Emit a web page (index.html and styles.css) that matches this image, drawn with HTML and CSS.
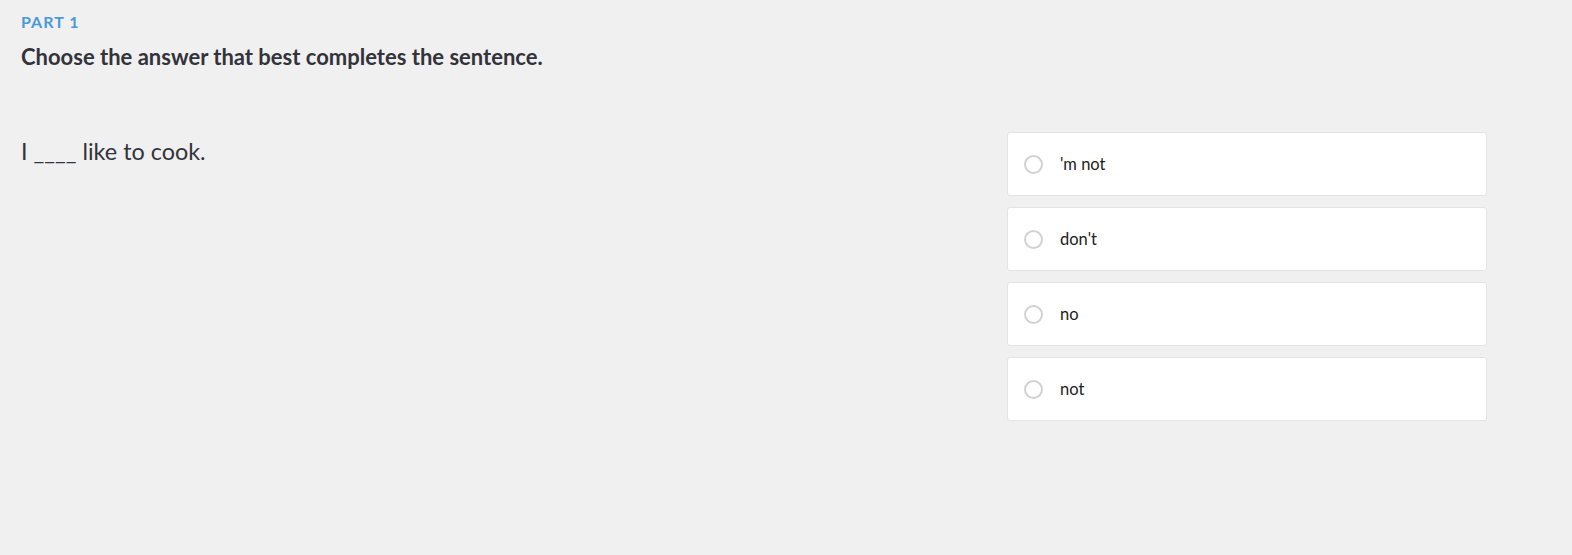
FILE: index.html
```html
<!DOCTYPE html>
<html lang="en">
<head>
    <meta charset="UTF-8">
    <title>Part 1</title>
    <link rel="stylesheet" href="styles.css">
</head>
<body>
    <div class="page">
        <p class="part">PART 1</p>
        <h1 class="instrucao">Choose the answer that best completes the sentence.</h1>

        <div class="questao">
            <p class="frase">I ____ like to cook.</p>
            <div class="opcoes">
                <label class="opcao"><span class="radio"></span><span class="txt">'m not</span></label>
                <label class="opcao"><span class="radio"></span><span class="txt">don't</span></label>
                <label class="opcao"><span class="radio"></span><span class="txt">no</span></label>
                <label class="opcao"><span class="radio"></span><span class="txt">not</span></label>
            </div>
        </div>
    </div>
</body>
</html>
```

FILE: styles.css
```css
body{
    margin: 0;
    background: #f0f0f0;
    font-family: Lato, "Noto Sans", sans-serif;
    color: #33333b;
}
.page{
    padding: 12px 85px 0 21px;
}
.part{
    margin: 0;
    font-size: 16px;
    font-weight: 700;
    letter-spacing: 1px;
    color: #4a9ad9;
}
.instrucao{
    margin: 12px 0 0 0;
    font-size: 22px;
    font-weight: 700;
    color: #33333b;
}
.questao{
    display: flex;
    justify-content: space-between;
    margin-top: 62px;
}
.frase{
    margin: 5px 0 0 0;
    font-size: 23.4px;
}
.opcoes{
    display: flex;
    flex-direction: column;
    gap: 11px;
    width: 480px;
}
.opcao{
    display: flex;
    align-items: center;
    height: 62px;
    background: #fff;
    border: 1px solid #e4e4e4;
    border-radius: 3px;
    padding-left: 16px;
    font-size: 16.5px;
    color: #222;
}
.radio{
    width: 15px;
    height: 15px;
    border: 2px solid #d2d2d2;
    border-radius: 50%;
    margin-right: 17px;
}
```
